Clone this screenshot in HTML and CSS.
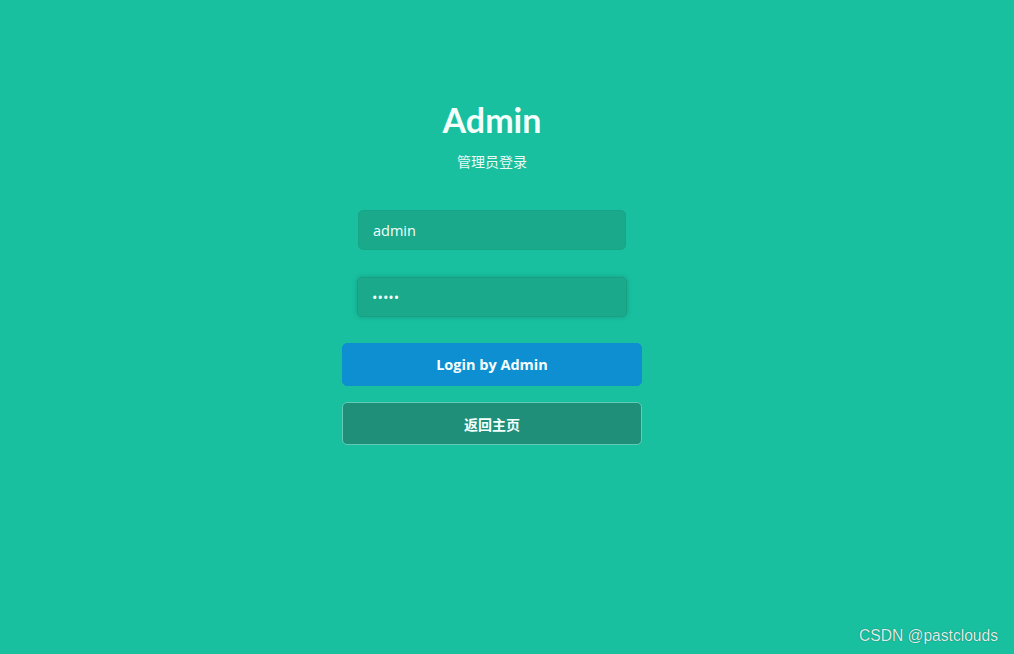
FILE: index.html
```html
<!DOCTYPE html>
<html lang="zh">
<head>
<meta charset="utf-8">
<title>Admin</title>
<link rel="stylesheet" href="styles.css">
</head>
<body>
<main class="page">
  <section class="login">
    <h1 class="title">Admin</h1>
    <p class="subtitle">管理员登录</p>
    <form class="form">
      <input class="field" type="text" value="admin">
      <input class="field field-focus" type="password" value="admin">
      <button class="btn btn-primary" type="button">Login by Admin</button>
      <button class="btn btn-back" type="button">返回主页</button>
    </form>
  </section>
</main>
<div class="watermark">CSDN @pastclouds</div>
</body>
</html>
```

FILE: styles.css
```css
html, body {
  margin: 0;
  padding: 0;
  height: 100%;
}
body {
  background: #18c0a0;
  font-family: "Lato", "Noto Sans CJK SC", sans-serif;
  color: #fff;
  overflow: hidden;
  position: relative;
}
.page {
  display: flex;
  justify-content: center;
  padding-right: 30px;
  padding-top: 100px;
}
.login {
  width: 300px;
  display: flex;
  flex-direction: column;
  align-items: center;
}
.title {
  margin: 0;
  font-size: 34px;
  line-height: 40px;
  font-weight: 700;
  color: #f4fffc;
}
.subtitle {
  margin: 11px 0 0;
  font-size: 14px;
  line-height: 20px;
  font-family: "Noto Sans CJK SC", sans-serif;
  color: #eafaf6;
}
.form {
  margin-top: 39px;
  width: 300px;
  display: flex;
  flex-direction: column;
  align-items: center;
}
.field {
  box-sizing: border-box;
  width: 268px;
  height: 40px;
  padding: 0 14px;
  border: 1px solid #17a487;
  border-radius: 5px;
  background: #1aa98b;
  color: #f2fffb;
  font-family: "Open Sans", "Noto Sans", sans-serif;
  font-size: 14.5px;
  outline: none;
}
.field + .field {
  margin-top: 27px;
}
.field-focus {
  width: 270px;
  border-color: #1b9e84;
  box-shadow: 0 0 5px rgba(0, 60, 45, 0.25);
}
.btn {
  box-sizing: border-box;
  width: 300px;
  height: 43px;
  border-radius: 5px;
  font-family: "Open Sans", "Noto Sans CJK SC", sans-serif;
  font-weight: 700;
  font-size: 14.5px;
  color: #f6fffd;
  cursor: pointer;
}
.btn-primary {
  margin-top: 26px;
  background: #0e8fd1;
  border: 1px solid #0e8fd1;
}
.btn-back {
  margin-top: 16px;
  background: #1f8f79;
  border: 1px solid #62cbb4;
  font-size: 14px;
  font-family: "Noto Sans CJK SC", sans-serif;
}
.watermark {
  position: absolute;
  right: 16px;
  bottom: 9px;
  font-family: "Liberation Sans", Arial, sans-serif;
  font-size: 15.6px;
  color: #dcefea;
  text-shadow: 0 0 1px rgba(0, 60, 50, 0.8);
}
```
